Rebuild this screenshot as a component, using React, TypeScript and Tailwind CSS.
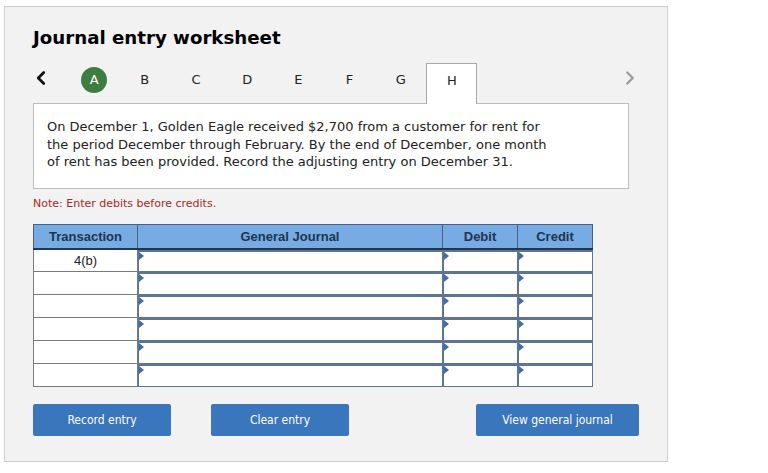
import { ChevronLeft, ChevronRight } from "lucide-react";

const tabs = ["A", "B", "C", "D", "E", "F", "G", "H"];
const rows = ["4(b)", "", "", "", "", ""];

function InputCell() {
  return (
    <td className="h-[23px] border border-[#5c7594] p-0">
      <div className="relative h-full w-full border-t-2 border-l border-[#5c7594] bg-white">
        <span className="absolute left-0 top-0 h-0 w-0 border-y-[4px] border-l-[5px] border-y-transparent border-l-[#3d6fa5]" />
      </div>
    </td>
  );
}

export default function App() {
  return (
    <div className="h-[473px] w-[768px] bg-white pl-[4px] pt-[6px]">
      <div className="h-[456px] w-[664px] border border-[#cfcfcf] bg-[#f2f2f2] px-[28px] pt-[19px] font-['DejaVu_Sans',sans-serif]">
        <h1 className="text-[18.2px] font-bold leading-[23px] text-black">Journal entry worksheet</h1>

        <div className="mt-[14px] flex h-[40px] w-[608px] items-stretch">
          <div className="flex w-[35px] items-center pb-[11px]">
            <ChevronLeft className="h-[22px] w-[22px] -ml-[3px] text-[#111]" strokeWidth={3} />
          </div>
          {tabs.map((t) => {
            if (t === "A") {
              return (
                <div key={t} className="flex w-[51.2px] items-center justify-center pb-[6px] pl-[1px]">
                  <span className="flex h-[26px] w-[26px] items-center justify-center rounded-full bg-[#3d7d3f] text-[13px] text-white">
                    A
                  </span>
                </div>
              );
            }
            if (t === "H") {
              return (
                <div
                  key={t}
                  className="relative z-10 -mb-px flex w-[51px] items-center justify-center border border-b-0 border-[#a9a9a9] bg-white pb-[7px] text-[13px] text-[#222]"
                >
                  H
                </div>
              );
            }
            return (
              <div key={t} className="flex w-[51.2px] items-center justify-center pb-[6px] text-[13px] text-[#222]">
                {t}
              </div>
            );
          })}
          <div className="flex flex-1 items-center justify-end pb-[11px]">
            <ChevronRight className="h-[22px] w-[22px] text-[#9a9a9a]" strokeWidth={2.5} />
          </div>
        </div>

        <div className="h-[86px] w-[596px] border border-[#bdbdbd] bg-white px-[13px] pt-[14px] text-[13px] leading-[17.5px] text-[#222]">
          On December 1, Golden Eagle received $2,700 from a customer for rent for
          <br />
          the period December through February. By the end of December, one month
          <br />
          of rent has been provided. Record the adjusting entry on December 31.
        </div>

        <p className="mt-[8px] text-[11px] leading-[14px] text-[#a52a2a]">Note: Enter debits before credits.</p>

        <table className="mt-[13px] w-[559px] table-fixed border-collapse font-['Liberation_Sans',Arial,sans-serif] text-[13px]">
          <colgroup>
            <col className="w-[104px]" />
            <col className="w-[305px]" />
            <col className="w-[75px]" />
            <col className="w-[75px]" />
          </colgroup>
          <thead>
            <tr className="h-[24px] bg-[#76abe3]">
              <th className="border border-[#4a607e] border-b-2 border-b-[#1f3550] font-bold text-[#1e3550]">Transaction</th>
              <th className="border border-[#4a607e] border-b-2 border-b-[#1f3550] font-bold text-[#1e3550]">General Journal</th>
              <th className="border border-[#4a607e] border-b-2 border-b-[#1f3550] font-bold text-[#1e3550]">Debit</th>
              <th className="border border-[#4a607e] border-b-2 border-b-[#1f3550] font-bold text-[#1e3550]">Credit</th>
            </tr>
          </thead>
          <tbody>
            {rows.map((r, i) => (
              <tr key={i} className="h-[23px]">
                <td className="border border-[#7a7a7a] bg-white p-0 text-center text-[#222]">{r}</td>
                <InputCell />
                <InputCell />
                <InputCell />
              </tr>
            ))}
          </tbody>
        </table>

        <div className="mt-[17px] flex w-[606px] font-['DejaVu_Sans_Condensed','DejaVu_Sans',sans-serif] text-[12px] text-white">
          <button type="button" className="h-[32px] w-[138px] rounded-[2px] bg-[#3a76bb]">
            Record entry
          </button>
          <button type="button" className="ml-[40px] h-[32px] w-[138px] rounded-[2px] bg-[#3a76bb]">
            Clear entry
          </button>
          <div className="flex-1" />
          <button type="button" className="h-[32px] w-[163px] rounded-[2px] bg-[#3a76bb]">
            View general journal
          </button>
        </div>
      </div>
    </div>
  );
}
